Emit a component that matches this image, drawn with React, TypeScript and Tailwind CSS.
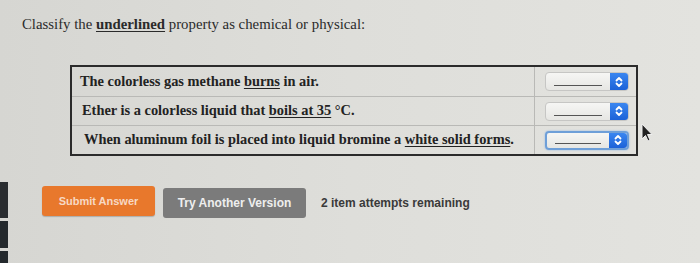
import React from "react";

function Chevrons() {
  return (
    <svg width="10" height="12" viewBox="0 0 10 12" fill="none" stroke="white" strokeWidth="1.8" strokeLinecap="round" strokeLinejoin="round">
      <path d="M2.5 4.5 L5 2 L7.5 4.5" />
      <path d="M2.5 7.5 L5 10 L7.5 7.5" />
    </svg>
  );
}

function Select({ focus }: { focus?: boolean }) {
  return (
    <div
      className={
        "flex h-[19px] w-[84px] items-stretch rounded-[4px] bg-gradient-to-b from-[#f6f6f4] to-[#e6e6e3] " +
        (focus ? "border-2 border-[#6e9fd8] shadow-[0_0_2px_#8ab4e6]" : "border border-[#c6c6c4]")
      }
    >
      <div className="flex flex-1 items-end px-[8px] pb-[4px]">
        <div className="h-[1px] w-full bg-[#555]" />
      </div>
      <div className="flex w-[18px] items-center justify-center rounded-r-[3px] bg-gradient-to-b from-[#3a86f0] to-[#1c62d8]">
        <Chevrons />
      </div>
    </div>
  );
}

export default function App() {
  const rows: React.ReactNode[] = [
    <span>
      The colorless gas methane <u className="underline-offset-2">burns</u> in air.
    </span>,
    <span>
      Ether is a colorless liquid that <u className="underline-offset-2">boils at 35</u> °C.
    </span>,
    <span>
      When aluminum foil is placed into liquid bromine a <u className="underline-offset-2">white solid forms</u>.
    </span>,
  ];
  return (
    <div className="relative h-[263px] w-[700px] overflow-hidden bg-gradient-to-r from-[#d6d6d2] via-[#dededa] to-[#e3e3df]">
      <div className="absolute left-0 top-[182px] flex flex-col gap-[3px]">
        <div className="h-[36px] w-[8px] bg-[#2a2d30]" />
        <div className="h-[27px] w-[8px] bg-[#23282c]" />
        <div className="h-[20px] w-[8px] bg-[#23282c]" />
      </div>
      <div className="flex flex-col pl-[22px] pt-[13px]">
        <div className="text-[14.8px] text-[#2a2a2a]" style={{ fontFamily: '"Liberation Serif", serif' }}>
          Classify the <b className="underline underline-offset-2">underlined</b> property as chemical or physical:
        </div>
        <div
          className="ml-[48px] mt-[30px] w-[568px] border-2 border-[#2b2b2b] text-[14.4px] font-bold text-[#222]"
          style={{ fontFamily: '"Liberation Serif", serif' }}
        >
          {rows.map((r, i) => (
            <div key={i} className={"flex h-[29px] " + (i > 0 ? "border-t border-[#b9b9b6]" : "")}>
              <div className={"flex w-[463px] items-center border-r border-[#b9b9b6] " + (i === 0 ? "pl-[8px]" : i === 1 ? "pl-[10px]" : "pl-[12px]")}>{r}</div>
              <div className="flex flex-1 items-center justify-center pl-[2px]">
                <Select focus={i === 2} />
              </div>
            </div>
          ))}
        </div>
        <div className="ml-[20px] mt-[28px] flex items-center gap-[8px]" style={{ fontFamily: '"Liberation Sans", Arial, sans-serif' }}>
          <div className="flex h-[30px] w-[113px] items-center justify-center rounded-[3px] bg-[#e8782c] text-[11px] font-bold text-[#f7d9c4] shadow-[0_1px_1px_rgba(0,0,0,0.2)]">
            Submit Answer
          </div>
          <div className="mt-[4px] flex h-[30px] w-[143px] items-center justify-center rounded-[3px] bg-[#7b7b7b] text-[12px] font-bold text-[#eeeeee]">
            Try Another Version
          </div>
          <div className="ml-[7px] mt-[4px] text-[12px] font-bold text-[#3a3a3a]">2 item attempts remaining</div>
        </div>
      </div>
      <svg className="absolute left-[640px] top-[123px]" width="14" height="20" viewBox="0 0 14 20">
        <path d="M2 1 L2 16 L5.5 12.5 L8 18 L10 17 L7.5 11.5 L12 11.5 Z" fill="#222" stroke="#eee" strokeWidth="1" />
      </svg>
    </div>
  );
}
